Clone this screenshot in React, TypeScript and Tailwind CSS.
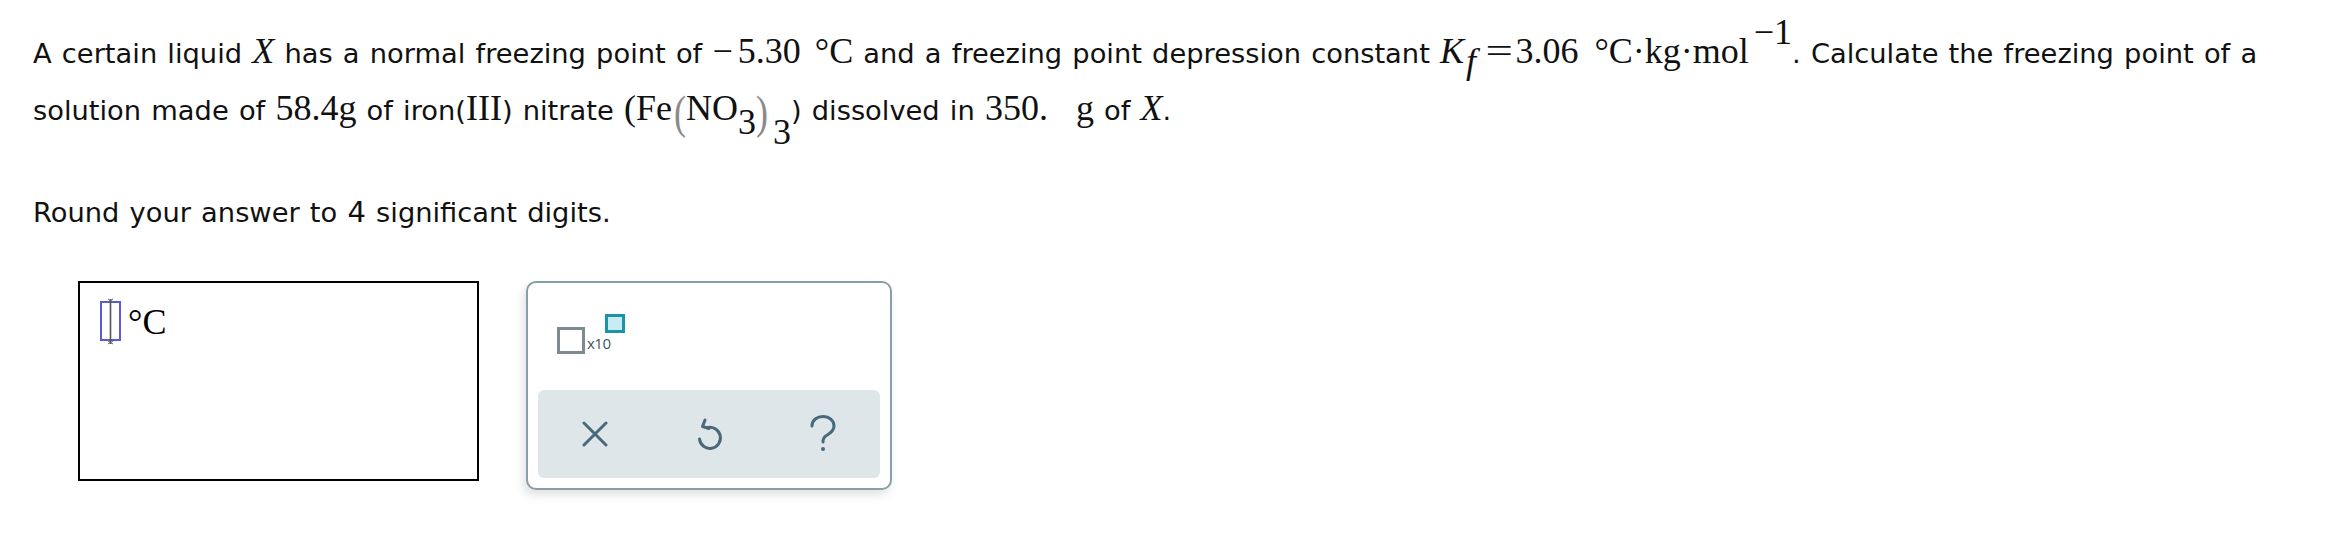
import React from 'react';

const SANS = "font-['DejaVu_Sans',Verdana,sans-serif]";
const SERIF = "font-['Liberation_Serif','Times_New_Roman',serif]";

// math run, rendered in a Times-like face a bit larger than the text
function M({ children, className = '' }: { children: React.ReactNode; className?: string }) {
  return <span className={`${SERIF} text-[36px] ${className}`}>{children}</span>;
}

function Cursor() {
  return (
    <svg width="24" height="47" viewBox="0 0 24 47" className="shrink-0">
      <rect x="2" y="4" width="19" height="38" fill="none" stroke="#5a5ad8" strokeWidth="2" />
      <line x1="11.5" y1="1" x2="11.5" y2="46" stroke="#555" strokeWidth="1.6" />
      <path d="M9 1 L14 4 M14 1 L9 4 M9 43 L14 46 M14 43 L9 46" stroke="#666" strokeWidth="1" />
    </svg>
  );
}

function TimesTen() {
  return (
    <div className="flex items-start leading-none">
      <div className="mt-[13px] w-[28px] h-[27px] border-[3px] border-[#7d8b91]" />
      <div className="ml-[2px] flex flex-col">
        <div className="ml-[18px] w-[20px] h-[19px] border-[3px] border-[#1c93a6] bg-[#c8ecf2]" />
        <span className="mt-[3px] font-['Open_Sans',sans-serif] text-[15px] leading-none text-[#44555c] tracking-[-0.5px]">x10</span>
      </div>
    </div>
  );
}

function IconX() {
  return (
    <svg width="26" height="26" viewBox="0 0 26 26">
      <path d="M2 2 L24 24 M24 2 L2 24" stroke="#48697a" strokeWidth="3" strokeLinecap="round" />
    </svg>
  );
}

function IconUndo() {
  return (
    <svg width="30" height="34" viewBox="0 0 30 34">
      <path d="M5.5 22 A10.5 10.5 0 1 0 13 10.8" fill="none" stroke="#48697a" strokeWidth="3" strokeLinecap="round" />
      <path d="M11 3 L8.5 9.5 L15 11.5" fill="none" stroke="#48697a" strokeWidth="3" strokeLinecap="round" strokeLinejoin="round" />
    </svg>
  );
}

function IconHelp() {
  return (
    <svg width="26" height="38" viewBox="0 0 26 38">
      <path
        d="M2 11 C2 5 7 1.5 13 1.5 C19 1.5 24 5.5 24 11 C24 16 20 18.5 16.5 20.5 C13.8 22 13 23.8 13 27"
        fill="none"
        stroke="#48697a"
        strokeWidth="3"
        strokeLinecap="round"
      />
      <circle cx="13" cy="34" r="2" fill="#48697a" />
    </svg>
  );
}

export default function App() {
  return (
    <div className={`bg-white w-[2335px] h-[559px] ${SANS} text-[27.3px] text-[#111] pl-[33px] [word-spacing:1.5px]`}>
      <p className="w-[2290px] leading-[55px] pt-[24px]">
        A certain liquid <M className="italic">X</M> has a normal freezing point of{' '}
        <M>−</M>
        <M className="ml-[5px]">5.30</M>
        <M className="ml-[14px]">°C</M> and a freezing point depression constant{' '}
        <M className="italic">K</M>
        <M className="italic text-[26px] leading-[0] align-[-10px] ml-[2px]">f</M>
        <M className="inline-block scale-x-[1.35] ml-[13px] mr-[6px]">=</M>
        <M>3.06</M>
        <M className="ml-[16px]">°C·kg·mol</M>
        <M className="text-[30px] leading-[0] align-[19px] ml-[5px]">−1</M>. Calculate the freezing point of a solution made of{' '}
        <M>58.4g</M> of iron(<M>III</M>) nitrate <M>(Fe</M>
        <M className="inline-block scale-y-[1.3] translate-y-[5px] text-[#8a8a8a] ml-[2px]">(</M>
        <M>NO</M>
        <M className="text-[27px] leading-[0] align-[-14px]">3</M>
        <M className="inline-block scale-y-[1.3] translate-y-[5px] text-[#8a8a8a]">)</M>
        <M className="text-[27px] leading-[0] align-[-24px] ml-[5px]">3</M>) dissolved in <M>350.</M>
        <M className="ml-[28px]">g</M> of <M className="italic">X</M>.
      </p>

      <p className="leading-[58px] mt-[45px]">
        Round your answer to <span className="text-[29px]">4</span> significant digits.
      </p>

      <div className="flex items-start gap-[47px] mt-[39px] ml-[45px]">
        <div className="w-[401px] h-[200px] border-[2.5px] border-black pl-[19px] pt-[15px] flex items-start">
          <Cursor />
          <span className={`${SERIF} text-[36px] leading-none mt-[6px] ml-[5px] text-black`}>°C</span>
        </div>

        <div className="w-[366px] h-[209px] rounded-[10px] border-2 border-[#8c9ea5] bg-white shadow-[-3px_5px_10px_rgba(40,60,70,0.15)] px-[10px] pb-[10px] flex flex-col">
          <div className="flex-1 pl-[19px] pt-[31px]">
            <TimesTen />
          </div>
          <div className="h-[88px] rounded-[6px] bg-[#dfe6e9] grid grid-cols-3 items-center justify-items-center">
            <IconX />
            <IconUndo />
            <IconHelp />
          </div>
        </div>
      </div>
    </div>
  );
}
